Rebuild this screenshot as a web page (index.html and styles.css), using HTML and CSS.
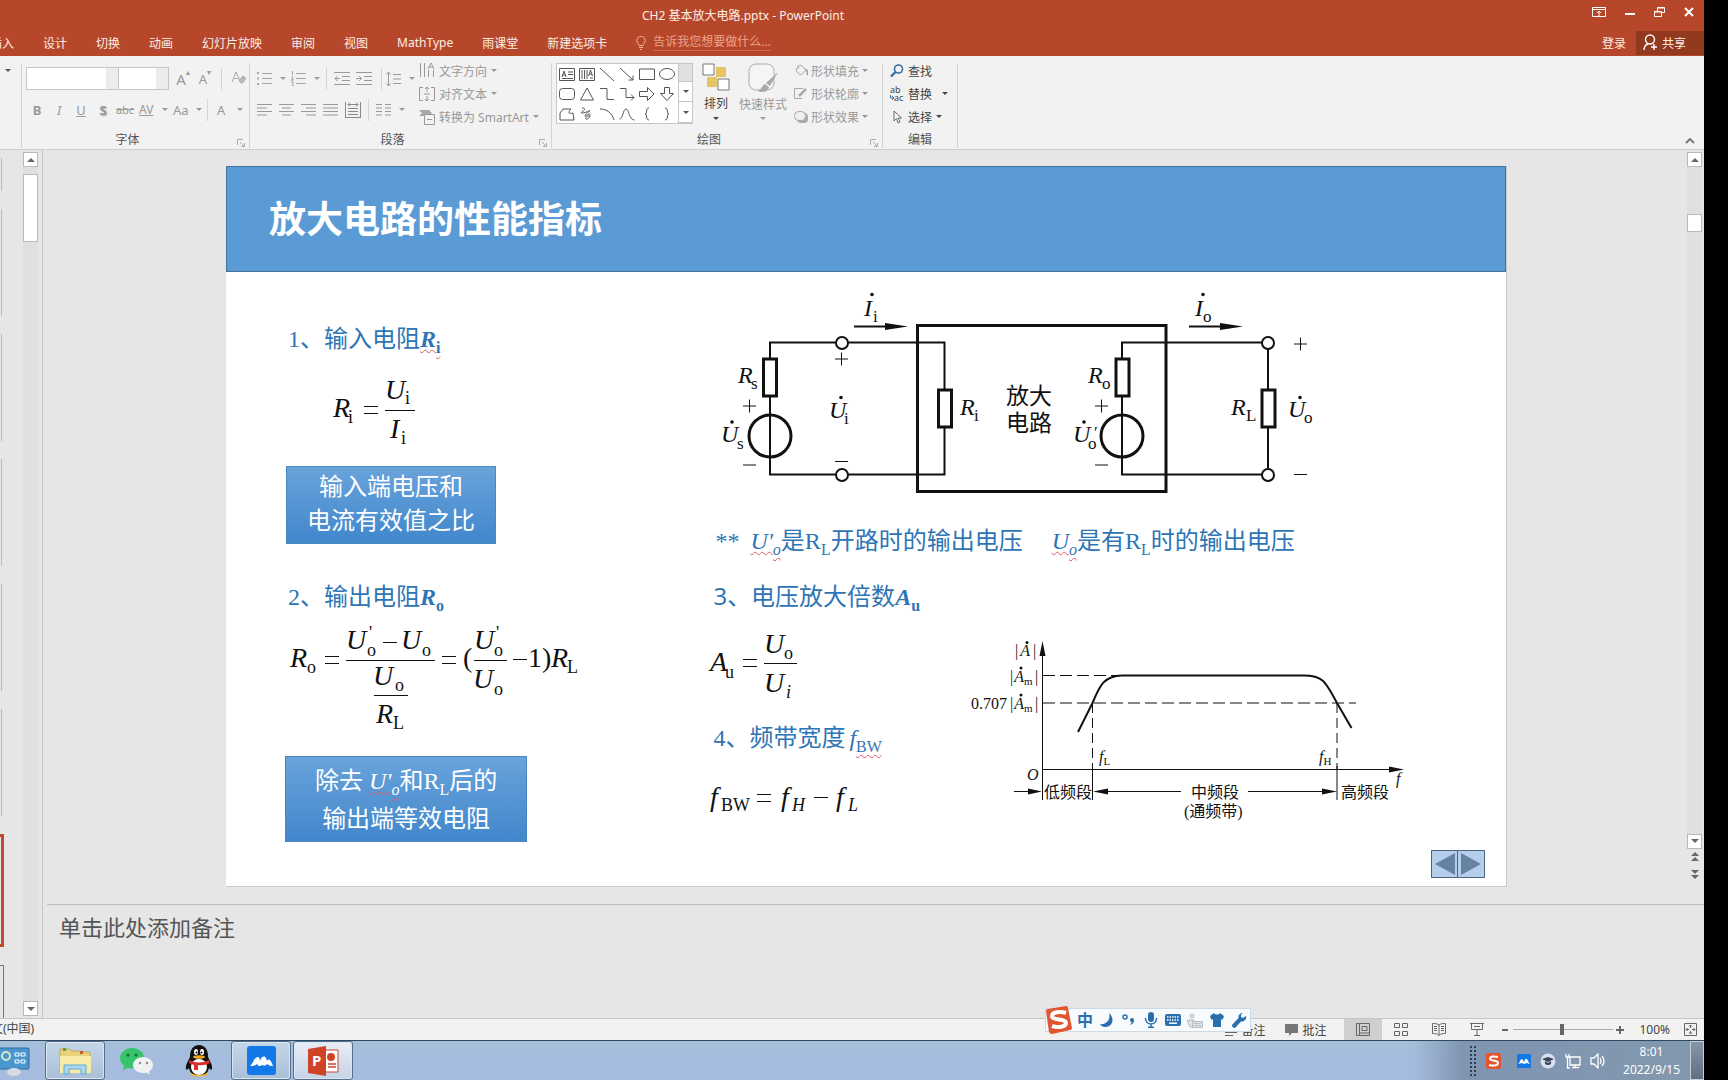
FILE: index.html
```html
<!DOCTYPE html>
<html lang="zh-CN">
<head>
<meta charset="utf-8">
<title>CH2 基本放大电路.pptx - PowerPoint</title>
<link rel="stylesheet" href="styles.css">
</head>
<body>
<div class="screen">

<header class="titlebar">
	<div class="title-row">
		<h1 class="doc-title">CH2 基本放大电路.pptx - PowerPoint</h1>
		<div class="window-buttons">
			<button aria-label="功能区显示选项"><svg width="14" height="10" viewBox="0 0 14 10" fill="none" stroke="#fff"><path d="M.5.5h13v9H.5zM.5 2.5h13M7 9V4M5 6l2-2 2 2"/></svg></button>
			<button aria-label="最小化"><svg width="10" height="10" viewBox="0 0 10 10"><path d="M0 6h10v2H0z" fill="#fff"/></svg></button>
			<button aria-label="还原"><svg width="11" height="10" viewBox="0 0 11 10" fill="none" stroke="#fff"><path d="M.5 4.5h7v5h-7zM.5 5h7M3.500 4V.5h7v5H8M3.500 1h7"/></svg></button>
			<button aria-label="关闭"><svg width="10" height="10" viewBox="0 0 10 10"><path d="M1 1l8 8M9 1L1 9" stroke="#fff" stroke-width="2"/></svg></button>
		</div>
	</div>
	<nav class="tabs">
		<a href="#">插入</a>
		<a href="#">设计</a>
		<a href="#">切换</a>
		<a href="#">动画</a>
		<a href="#">幻灯片放映</a>
		<a href="#">审阅</a>
		<a href="#">视图</a>
		<a href="#">MathType</a>
		<a href="#">雨课堂</a>
		<a href="#">新建选项卡</a>
		<a href="#" class="tell-me"><svg width="10" height="14" viewBox="0 0 10 14" fill="none" stroke="#f2b5a2"><path d="M3 9.500C3 7.500.8 7 .8 4.500a4.200 4.200 0 0 1 8.400 0C9.200 7 7 7.500 7 9.500zM3 11.500h4M4 13.500h2"/></svg><span>告诉我您想要做什么...</span></a>
		<a href="#" class="login">登录</a>
		<button class="share"><svg width="15" height="17" viewBox="0 0 15 17" fill="none" stroke="#fff" stroke-width="1.400"><circle cx="7" cy="5.500" r="4.500"/><path d="M1 16c0-3 1.500-5 4-6M8 13h6M11 10v6"/></svg>共享</button>
	</nav>
</header>

<!-- ribbon -->
<div class="ribbon">
	<div class="group group-cut"><span class="cut-caret caret"></span></div>

	<section class="group group-font">
		<div class="row">
			<select class="font-name" aria-label="字体"></select><select class="font-size" aria-label="字号"></select>
			<button class="tool big-a" aria-label="增大字号">A<sup>▴</sup></button>
			<button class="tool small-a" aria-label="减小字号">A<sup>▾</sup></button>
			<span class="sep"></span>
			<button class="tool" aria-label="清除格式"><svg width="15" height="15" viewBox="0 0 15 15" fill="none" stroke="#aaa"><path d="M1 11L5 1l4 9M2.500 7.500H8"/><path d="M8 10l4-5 3 2.500-4 5z" fill="#bbb"/></svg></button>
		</div>
		<div class="row">
			<button class="tool"><b>B</b></button>
			<button class="tool"><i>I</i></button>
			<button class="tool"><u>U</u></button>
			<button class="tool shadow-s"><b>S</b></button>
			<button class="tool small"><s>abc</s></button>
			<button class="tool drop av">AV<span class="caret"></span></button>
			<button class="tool drop">Aa<span class="caret"></span></button>
			<span class="sep"></span>
			<button class="tool drop font-color">A<span class="caret"></span></button>
		</div>
		<h2 class="group-name">字体</h2>
		<button class="launcher" aria-label="字体设置"><svg width="8" height="8" viewBox="0 0 8 8" fill="none" stroke="#aaa"><path d="M.5 6V.5H6M3 3l4 4M7.500 4v3.500H4"/></svg></button>
	</section>

	<section class="group group-para">
		<div class="para-tools">
			<div class="row">
				<button class="tool drop" aria-label="项目符号"><svg width="15" height="15" viewBox="0 0 15 15" stroke="#a5a5a5"><path d="M0 2h2M0 7.500h2M0 13h2" stroke-width="2"/><path d="M5 2.500h10M5 7.500h10M5 12.500h10"/></svg><span class="caret"></span></button>
				<button class="tool drop" aria-label="编号"><svg width="15" height="15" viewBox="0 0 15 15" stroke="#a5a5a5" fill="none"><path d="M1.500 0v4M0 6h2v1L0 9h3M0 11h2v4H0M5 2.500h10M5 7.500h10M5 12.500h10"/></svg><span class="caret"></span></button>
				<span class="sep"></span>
				<button class="tool" aria-label="减少缩进"><svg width="16" height="14" viewBox="0 0 16 14" stroke="#999" fill="none"><path d="M0 .5h16M8 4.500h8M8 8.500h8M0 12.500h16M6 6.500H1M3.500 4L1 6.500 3.500 9"/></svg></button>
				<button class="tool" aria-label="增加缩进"><svg width="16" height="14" viewBox="0 0 16 14" stroke="#999" fill="none"><path d="M0 .5h16M8 4.500h8M8 8.500h8M0 12.500h16M0 6.500h5M3 4l2.500 2.500L3 9"/></svg></button>
				<span class="sep"></span>
				<button class="tool drop" aria-label="行距"><svg width="15" height="16" viewBox="0 0 15 16" stroke="#999" fill="none"><path d="M2.500 1v14M.5 3.500l2-2.500 2 2.500M.5 12.500l2 2.500 2-2.500M7 3.500h8M7 8h8M7 12.500h8"/></svg><span class="caret"></span></button>
			</div>
			<div class="row row-align">
				<button class="tool" aria-label="左对齐"><svg width="15" height="12" viewBox="0 0 15 12" stroke="#999"><path d="M0 .5h15M0 4h10M0 7.500h15M0 11h10"/></svg></button>
				<button class="tool" aria-label="居中"><svg width="15" height="12" viewBox="0 0 15 12" stroke="#999"><path d="M0 .5h15M3 4h9M0 7.500h15M3 11h9"/></svg></button>
				<button class="tool" aria-label="右对齐"><svg width="15" height="12" viewBox="0 0 15 12" stroke="#999"><path d="M0 .5h15M5 4h10M0 7.500h15M5 11h10"/></svg></button>
				<button class="tool" aria-label="两端对齐"><svg width="15" height="12" viewBox="0 0 15 12" stroke="#999"><path d="M0 .5h15M0 4h15M0 7.500h15M0 11h15"/></svg></button>
				<button class="tool" aria-label="分散对齐"><svg width="16" height="16" viewBox="0 0 16 16" stroke="#888" fill="none"><path d="M.5 0v16M15.500 0v16M3 2.500h10M5 .5l-2 2 2 2M11 .5l2 2-2 2M3 6.500h10M3 9.500h10M3 12.500h10M0 15.500h16"/></svg></button>
				<span class="sep"></span>
				<button class="tool drop" aria-label="分栏"><svg width="15" height="12" viewBox="0 0 15 12" stroke="#999"><path d="M0 .5h6M9 .5h6M0 4h6M9 4h6M0 7.500h6M9 7.500h6M0 11h6M9 11h6"/></svg><span class="caret"></span></button>
			</div>
		</div>
		<div class="stack">
			<button class="wide"><svg width="16" height="16" viewBox="0 0 16 16" stroke="#999" fill="none"><path d="M1.500 0v14M5.500 0v14M9.500 7v7M14.500 7v7M9 6l3-6 3 6M10 4h4"/></svg>文字方向<span class="caret"></span></button>
			<button class="wide"><svg width="16" height="16" viewBox="0 0 16 16" stroke="#999" fill="none"><path d="M4 1.500H.5v13H4M12 1.500h3.500v13H12M8 1v5M6 3l2-2 2 2M8 15v-5M6 13l2 2 2-2M5 8h6"/></svg>对齐文本<span class="caret"></span></button>
			<button class="wide"><svg width="16" height="16" viewBox="0 0 16 16" stroke="#999" fill="none"><path d="M0 1h10l3 3-3 3H0l3-3z" fill="#aaa" stroke="none"/><path d="M5.500 5.500h10v10h-10z" fill="#f1f2f1"/><path d="M8 10.500h5"/></svg>转换为 SmartArt<span class="caret"></span></button>
		</div>
		<h2 class="group-name">段落</h2>
		<button class="launcher" aria-label="段落设置"><svg width="8" height="8" viewBox="0 0 8 8" fill="none" stroke="#aaa"><path d="M.5 6V.5H6M3 3l4 4M7.500 4v3.500H4"/></svg></button>
	</section>

	<section class="group group-draw">
		<div class="gallery">
			<div class="shapes">
				<button aria-label="文本框"><svg viewBox="0 0 16 14"><path d="M.5 1.500h15v12H.5zM3 10l2-6 2 6M4 8h2M9 5h5M9 7.500h5M3 11.500h11"/></svg></button>
				<button aria-label="竖排文本框"><svg viewBox="0 0 16 14"><path d="M.5 1.500h15v12H.5zM3 3v9M5.500 3v9M8 3v9M9.500 9l2-6 2 6M10 7h3M11 11h3"/></svg></button>
				<button aria-label="直线"><svg viewBox="0 0 16 14"><path d="M1 1l14 13"/></svg></button>
				<button aria-label="箭头"><svg viewBox="0 0 16 14"><path d="M1 1l13 12M14 8.500V13H9.500"/></svg></button>
				<button aria-label="矩形"><svg viewBox="0 0 16 14"><path d="M.5 2h15v10.500H.5z"/></svg></button>
				<button aria-label="椭圆"><svg viewBox="0 0 16 14"><ellipse cx="8" cy="7" rx="7.500" ry="5.500"/></svg></button>
				<button aria-label="圆角矩形"><svg viewBox="0 0 16 14"><rect x=".5" y="1.500" width="15" height="11" rx="3"/></svg></button>
				<button aria-label="三角形"><svg viewBox="0 0 16 14"><path d="M8 1l6.500 12h-13z"/></svg></button>
				<button aria-label="肘形"><svg viewBox="0 0 16 14"><path d="M1 1.500h7v11h7"/></svg></button>
				<button aria-label="肘形箭头"><svg viewBox="0 0 16 14"><path d="M1 1.500h6v9h8M12 7.500l3 3-3 3"/></svg></button>
				<button aria-label="右箭头"><svg viewBox="0 0 16 14"><path d="M.5 4.500h8v-4L15 7l-6.500 6.500v-4h-8z"/></svg></button>
				<button aria-label="下箭头"><svg viewBox="0 0 16 14"><path d="M5.500.5h5v6h4L8 13.500 1.500 6.500h4z"/></svg></button>
				<button aria-label="任意多边形"><svg viewBox="0 0 16 14"><path d="M1 13V6l3-4h8C8 6 10 7 14 6l1 7z"/></svg></button>
				<button aria-label="自由曲线"><svg viewBox="0 0 16 14"><path d="M3 1c4 0 3 2 0 4s3 1 7-1-5 4-4 5 5-4 5-1-3 5-4 4 1-3 3-3"/></svg></button>
				<button aria-label="弧形"><svg viewBox="0 0 16 14"><path d="M1 2c7 0 12 4 14 11"/></svg></button>
				<button aria-label="曲线"><svg viewBox="0 0 16 14"><path d="M.5 12C4 12 4 2 7 2s3 11 8.500 11"/></svg></button>
				<button aria-label="左大括号"><svg viewBox="0 0 16 14"><path d="M10 1C6 1 9 7 6 7c3 0 0 6 4 6"/></svg></button>
				<button aria-label="右大括号"><svg viewBox="0 0 16 14"><path d="M6 1c4 0 1 6 4 6-3 0 0 6-4 6"/></svg></button>
			</div>
			<div class="gallery-scroll">
				<button class="dim" aria-label="上一行"></button>
				<button aria-label="下一行"><span class="caret"></span></button>
				<button class="more" aria-label="其他"><span class="caret"></span></button>
			</div>
		</div>
		<button class="tall dark"><svg width="28" height="28" viewBox="0 0 28 28"><path d="M14 4h10v10H14zM5 14h10v10H5z" fill="#e3c566"/><path d="M1 1h11v11H1zM16 16h11v11H16z" fill="#fff" stroke="#777"/></svg>排列<span class="caret"></span></button>
		<button class="tall"><svg width="30" height="30" viewBox="0 0 30 30"><rect x="1" y="1" width="25" height="26" rx="7" fill="#f5f5f7" stroke="#aaa"/><path d="M30 9L18 20l4 3zM17 21c-3 1-3 6-8 7 6 2 11 1 12-4z" fill="#aaa"/></svg>快速样式<span class="caret"></span></button>
		<div class="stack">
			<button class="wide"><svg width="14" height="14" viewBox="0 0 14 14" stroke="#aaa" fill="none"><path d="M2 5l5-4 5 5-5 5-4-3zM4 1v4"/><path d="M11 5c3 2 3 4 2 6" stroke-width="2"/></svg>形状填充<span class="caret"></span></button>
			<button class="wide"><svg width="14" height="14" viewBox="0 0 14 14" stroke="#aaa" fill="none"><path d="M9 1.500H.5v10H8"/><path d="M5 9l7-7" stroke-width="2.500"/></svg>形状轮廓<span class="caret"></span></button>
			<button class="wide"><svg width="14" height="14" viewBox="0 0 14 14"><rect x="3" y="3" width="11" height="10" rx="4" fill="#aaa"/><rect x=".5" y="1.500" width="11" height="9" rx="4" fill="#eee" stroke="#aaa"/></svg>形状效果<span class="caret"></span></button>
		</div>
		<h2 class="group-name">绘图</h2>
		<button class="launcher" aria-label="形状设置"><svg width="8" height="8" viewBox="0 0 8 8" fill="none" stroke="#aaa"><path d="M.5 6V.5H6M3 3l4 4M7.500 4v3.500H4"/></svg></button>
	</section>

	<section class="group group-edit">
		<div class="stack">
			<button class="wide dark"><svg width="14" height="14" viewBox="0 0 14 14" fill="none" stroke="#3a6ea5" stroke-width="1.600"><circle cx="8.500" cy="5" r="4"/><path d="M5.500 8L1 12.500" stroke-width="2.400"/></svg>查找</button>
			<button class="wide dark"><svg width="14" height="16" viewBox="0 0 14 16" font-size="9" fill="#444"><text x="0" y="7">ab</text><text x="4" y="15">ac</text><path d="M.5 9v3H4M2 10l2 2-2 2" fill="none" stroke="#3a6ea5"/></svg>替换<span class="caret caret-far"></span></button>
			<button class="wide dark"><svg width="14" height="14" viewBox="0 0 14 14" fill="#fff" stroke="#666"><path d="M4 1v10l2.500-2.500L8 13l2-1-2-4h3.500z"/></svg>选择<span class="caret"></span></button>
		</div>
		<h2 class="group-name">编辑</h2>
	</section>

	<button class="collapse" aria-label="折叠功能区"><svg width="10" height="6" viewBox="0 0 10 6" fill="none" stroke="#777" stroke-width="2"><path d="M1 5l4-4 4 4"/></svg></button>
</div>

<main class="workspace">
	<aside class="thumbs">
		<div class="thumb-list">
			<button class="thumb first" aria-label="幻灯片 1"></button>
			<button class="thumb" aria-label="幻灯片 2"></button>
			<button class="thumb" aria-label="幻灯片 3"></button>
			<button class="thumb" aria-label="幻灯片 4"></button>
			<button class="thumb" aria-label="幻灯片 5"></button>
			<button class="thumb" aria-label="幻灯片 6"></button>
			<button class="thumb current" aria-label="幻灯片 7"></button>
			<button class="thumb next" aria-label="幻灯片 8"></button>
		</div>
		<div class="scrollbar">
			<button class="arrow up" aria-label="向上滚动"></button>
			<div class="track"><div class="handle"></div></div>
			<button class="arrow down" aria-label="向下滚动"></button>
		</div>
	</aside>

	<div class="editor">
		<div class="canvas">
			<article class="slide">
				<header class="slide-head"><h2>放大电路的性能指标</h2></header>
				<div class="slide-body">
					<div class="col-left">
						<h3>1、输入电阻<b class="typo"><i>R</i><sub>i</sub></b></h3>
						<svg class="eq" width="180" height="109" viewBox="286 357 180 109">
							<g class="var"><text x="333" y="417">R</text><text x="385" y="399">U</text><text x="390" y="438">I</text></g>
							<g class="idx"><text x="348" y="423">i</text><text x="405" y="404">i</text><text x="401" y="444">i</text></g>
							<path d="M364 406.500h14M364 413.500h14M385 410.500h30"/>
						</svg>
						<p class="callout">输入端电压和<br>电流有效值之比</p>
						<h3>2、输出电阻<b><i>R</i><sub>o</sub></b></h3>
						<svg class="eq" width="310" height="141" viewBox="286 615 310 141">
							<g class="var"><text x="290" y="667">R</text><text x="346" y="649">U</text><text x="401" y="649">U</text><text x="373" y="685">U</text><text x="376" y="723">R</text><text x="474" y="649">U</text><text x="473" y="688">U</text><text x="551" y="667">R</text></g>
							<g class="idx"><text x="307" y="673">o</text><text x="367" y="656">o</text><text x="422" y="656">o</text><text x="395" y="691">o</text><text x="393" y="729">L</text><text x="494" y="656">o</text><text x="494" y="695">o</text><text x="567" y="673">L</text><text x="369" y="639">'</text><text x="496" y="639">'</text></g>
							<g class="num"><text x="463" y="667">(</text><text x="528" y="667">1)</text></g>
							<path d="M325 656.500h14M325 663.500h14M346 660.500h89M374 695.500h34M383 642.500h14M442 656.500h14M442 663.500h14M474 660.500h33M513 659.500h14"/>
						</svg>
						<p class="callout callout-tall">除去 <span class="typo"><i>U'</i><sub><i>o</i></sub></span>和R<sub>L</sub>后的<br>输出端等效电阻</p>
					</div>

					<div class="col-right">
						<!-- equivalent circuit of the amplifier -->
						<svg class="circuit" width="620" height="240" viewBox="713 283 620 240">
							<g class="wire">
								<path d="M836 342.500H770V358M770 397V474.500H836M848 342.500H944.500V389M944.500 428V474.500H848"/>
								<path d="M1262 342.500H1122V358M1122 397V474.500H1262M1268 349V389M1268 428V468"/>
							</g>
							<g class="part">
								<rect x="917.500" y="325.500" width="248.500" height="166"/>
								<rect x="763.500" y="359" width="13" height="37"/>
								<rect x="938.500" y="390" width="13" height="37"/>
								<rect x="1116" y="359" width="13" height="37"/>
								<rect x="1262" y="390" width="13" height="37"/>
								<circle cx="770" cy="436" r="21"/>
								<circle cx="1122" cy="436" r="21"/>
							</g>
							<g class="terminal">
								<circle cx="842" cy="343" r="6"/><circle cx="842" cy="475" r="6"/>
								<circle cx="1268" cy="343" r="6"/><circle cx="1268" cy="475" r="6"/>
							</g>
							<path class="wire" d="M854 326.500h34M1189 326.500h34"/>
							<path d="M885 323l23 3.500-23 3.500zM1220 323l23 3.500-23 3.500z"/>
							<g class="var"><text x="864" y="316">I</text><text x="1195" y="316">I</text><text x="738" y="383">R</text><text x="721" y="442">U</text><text x="829" y="418">U</text><text x="960" y="415">R</text><text x="1088" y="383">R</text><text x="1073" y="442">U</text><text x="1231" y="415">R</text><text x="1288" y="417">U</text></g>
							<g class="idx"><text x="873" y="322">i</text><text x="1203" y="322">o</text><text x="751" y="389">s</text><text x="737" y="449">s</text><text x="844" y="424">i</text><text x="974" y="421">i</text><text x="1102" y="389">o</text><text x="1088" y="449">o</text><text x="1246" y="421">L</text><text x="1304" y="423">o</text><text x="1094" y="438">′</text></g>
							<g><circle cx="872" cy="294.500" r="1.800"/><circle cx="1203" cy="294.500" r="1.800"/><circle cx="732" cy="422" r="1.800"/><circle cx="841" cy="397.500" r="1.800"/><circle cx="1084" cy="422" r="1.800"/><circle cx="1300" cy="397.500" r="1.800"/></g>
							<path class="sign" d="M743 406h13M749.500 399.500v13M743 465h13M835 359h13M841.500 352.500v13M835 461.500h13M1095 406h13M1101.500 399.500v13M1095 465h13M1294 344h13M1300.500 337.500v13M1294 474.500h13"/>
							<g class="cn"><text x="1006" y="404">放大</text><text x="1006" y="431">电路</text></g>
						</svg>
						<p class="note"><span>**</span><span><span class="typo"><i>U'</i><sub><i>o</i></sub></span>是R<sub>L</sub>开路时的输出电压</span><span class="second"><span class="typo"><i>U</i><sub><i>o</i></sub></span>是有R<sub>L</sub>时的输出电压</span></p>

						<div class="lower">
							<div class="lower-text">
								<h3><span class="sans">3</span>、电压放大倍数<b><i>A</i><sub>u</sub></b></h3>
								<svg class="eq" width="200" height="105" viewBox="709 615 200 105">
									<g class="var"><text x="711" y="671">A</text><text x="765" y="653">U</text><text x="765" y="692">U</text></g>
									<g class="idx"><text x="726" y="678">u</text><text x="785" y="659">o</text><text class="it" x="787" y="698">i</text></g>
									<path d="M744 659.500h14M744 666.500h14M765 663.500h33"/>
								</svg>
								<h3>4、频带宽度<i class="gap">f</i><sub class="typo">BW</sub></h3>
								<svg class="eq" width="200" height="80" viewBox="709 756 200 80">
									<g class="var"><text x="711" y="806">f</text><text x="782" y="806">f</text><text x="837" y="806">f</text></g>
									<g class="idx"><text x="722" y="811">BW</text><text class="it" x="793" y="811">H</text><text class="it" x="849" y="811">L</text></g>
									<path d="M758 794.500h14M758 801.500h14M815 797.500h14"/>
								</svg>
							</div>
							<div class="lower-chart">
								<svg class="chart" width="460" height="205" viewBox="960 635 460 205">
									<g class="axis"><path d="M1042.500 650V800M1042 769.500H1395M1092.500 766V800M1337 766V800M1014 791.500h20M1104 791.500h77M1248 791.500h78"/><path d="M1043 675.500h80M1043 703H1356" stroke-dasharray="12 5"/><path d="M1092.500 703v66M1337 703v66" stroke-dasharray="10 5"/></g>
									<path class="curve" d="M1078 732L1092.500 703C1100 685 1104 676 1122 675.500H1302C1322 675 1325 680 1337 703L1351.500 728"/>
									<path d="M1042.500 641l3 15h-6zM1404 769.500l-15 3v-6zM1042 791.500l-14 3v-6zM1093 791.500l15-3v6zM1337 791.500l-15-3v6z"/>
									<g class="lbl"><text x="1015" y="656">|<tspan class="it" dx="2">A</tspan></text><text x="1033" y="656">|</text><text x="1010" y="682">|<tspan class="it" dx="1">A</tspan><tspan class="tiny" dy="3">m</tspan></text><text x="1035" y="682">|</text><text x="971" y="709">0.707</text><text x="1010" y="709">|<tspan class="it" dx="1">A</tspan><tspan class="tiny" dy="3">m</tspan></text><text x="1035" y="709">|</text><text class="it" x="1027" y="780">O</text><text class="it" x="1396" y="784">f</text><text x="1099" y="762"><tspan class="it">f</tspan><tspan class="tiny" dy="3">L</tspan></text><text x="1319" y="762"><tspan class="it">f</tspan><tspan class="tiny" dy="3">H</tspan></text></g>
									<g><circle cx="1027" cy="642.500" r="1.500"/><circle cx="1021" cy="668" r="1.500"/><circle cx="1021" cy="695" r="1.500"/></g>
									<g class="band"><text x="1044" y="798">低频段</text><text x="1191" y="798">中频段</text><text x="1341" y="798">高频段</text><text x="1184" y="817">(通频带)</text></g>
								</svg>
								<div class="slide-nav">
									<button aria-label="上一张"><svg width="20" height="22" viewBox="0 0 20 22"><path d="M0 11L20 0v22z"/></svg></button>
									<button aria-label="下一张"><svg width="20" height="22" viewBox="0 0 20 22"><path d="M20 11L0 0v22z"/></svg></button>
								</div>
							</div>
						</div>
					</div>
				</div>
			</article>
			<div class="scrollbar scrollbar-slide">
				<button class="arrow up" aria-label="向上滚动"></button>
				<div class="track"><div class="handle"></div></div>
				<button class="arrow down" aria-label="向下滚动"></button>
				<button class="page" aria-label="上一张幻灯片"><svg width="8" height="10" viewBox="0 0 8 10"><path d="M4 0l4 4H0zM4 5l4 4H0z"/></svg></button>
				<button class="page" aria-label="下一张幻灯片"><svg width="8" height="10" viewBox="0 0 8 10"><path d="M4 5L0 1h8zM4 10L0 6h8z"/></svg></button>
			</div>
		</div>
		<div class="notes">单击此处添加备注</div>
	</div>
</main>

<footer class="statusbar">
	<span class="lang">文(中国)</span>
	<button class="status-btn notes-btn"><svg width="12" height="12" viewBox="0 0 12 12" stroke="#666"><path d="M0 8.500h12M0 11.500h8"/></svg>备注</button>
	<button class="status-btn comments-btn"><svg width="13" height="12" viewBox="0 0 13 12"><path d="M0 0h13v9H7l-3 3V9H0z" fill="#777"/></svg>批注</button>
	<div class="views">
		<button class="on" aria-label="普通视图"><svg width="14" height="13" viewBox="0 0 14 13"><path d="M.5.5h13v12H.5zM3.500.5v12M6 3.500h5v4H6zM3.500 10h10"/></svg></button>
		<button aria-label="幻灯片浏览"><svg width="14" height="13" viewBox="0 0 14 13"><path d="M.5.500h5v4h-5zM8.500.500h5v4h-5zM.5 8.500h5v4h-5zM8.500 8.500h5v4h-5z"/></svg></button>
		<button aria-label="阅读视图"><svg width="14" height="13" viewBox="0 0 14 13"><path d="M7 2C5 .5 3 .5.500.500v10c2.500 0 4.500 0 6.500 2 2-2 4-2 6.500-2v-10C11 .5 9 .5 7 2zM7 2v10M2 3.500h3M2 5.500h3M2 7.500h3M9 3.500h3M9 5.500h3M9 7.500h3"/></svg></button>
		<button aria-label="幻灯片放映"><svg width="14" height="13" viewBox="0 0 14 13"><path d="M0 .5h14M1.500.500v6h11v-6M4 3.500h6M7 7v5M4 12.500h6"/></svg></button>
	</div>
	<button class="zoom-btn" aria-label="缩小"><svg width="8" height="8" viewBox="0 0 8 8"><path d="M1 3h6v2H1z" fill="#666"/></svg></button>
	<input class="zoom" type="range" min="0" max="200" value="98" aria-label="显示比例">
	<button class="zoom-btn" aria-label="放大"><svg width="8" height="8" viewBox="0 0 8 8"><path d="M0 3h3V0h2v3h3v2H5v3H3V5H0z" fill="#666"/></svg></button>
	<span class="percent">100%</span>
	<button class="fit" aria-label="适应窗口"><svg width="13" height="13" viewBox="0 0 13 13" fill="none" stroke="#666"><path d="M.5.500h12v12H.5zM6.500 2v3M6.500 8v3M2 6.500h3M8 6.500h3M5 3.500L6.500 2 8 3.500M5 9.500L6.500 11 8 9.500M3.500 5L2 6.500 3.500 8M9.500 5L11 6.500 9.500 8"/></svg></button>
</footer>

<!-- input method bar floats over the status bar -->
<div class="ime">
	<svg class="ime-logo" width="29" height="28" viewBox="0 0 29 28"><path d="M1 5Q1 3 3 3L21 0q2 0 2 2l4 20q0 2-2 2L7 28q-2 0-3-2z" fill="#e2552f"/><path d="M21 7C15 5 7 6 7 10c0 5 14 2 14 7 0 4-8 5-14 3" fill="none" stroke="#fff" stroke-width="4"/></svg>
	<button class="zh">中</button>
	<button aria-label="半角"><svg width="14" height="14" viewBox="0 0 14 14"><path d="M9 0c6 5 4 14-4 14-2 0-4-1-5-3 6 1 11-4 9-11z"/></svg></button>
	<button aria-label="标点"><svg width="14" height="14" viewBox="0 0 14 14"><circle cx="3" cy="4" r="2" fill="none" stroke="#2a6fad" stroke-width="1.500"/><path d="M8 7a2 2 0 1 1 4 0q0 4-4 5 2-2 1.500-3Q8 9 8 7z"/></svg></button>
	<button aria-label="语音"><svg width="14" height="16" viewBox="0 0 14 16"><rect x="4" y="0" width="6" height="10" rx="3"/><path d="M1.500 6c0 8 11 8 11 0M7 12v3M4 15.200h6" fill="none" stroke="#2a6fad" stroke-width="1.500"/></svg></button>
	<button aria-label="软键盘"><svg width="16" height="12" viewBox="0 0 16 12"><rect width="16" height="12" rx="2"/><path d="M2 3h12M2 6h12" stroke="#fff" stroke-width="1.500" stroke-dasharray="1.500 1"/><path d="M4 9.200h8" stroke="#fff" stroke-width="1.500"/></svg></button>
	<button aria-label="账户"><svg class="faded" width="16" height="15" viewBox="0 0 16 15" stroke="#b5bcc2"><circle cx="5" cy="3" r="2"/><path d="M0 7h7v7H3z"/><path d="M5.500 8.500h10v6h-10zM7 10.500h7M7 12.500h7"/></svg></button>
	<button aria-label="皮肤"><svg width="14" height="14" viewBox="0 0 14 14"><path d="M4 0c1 2 5 2 6 0l4 3-1.500 4L11 6v8H3V6L1.500 7 0 3z"/></svg></button>
	<button aria-label="工具"><svg width="15" height="15" viewBox="0 0 15 15"><path d="M14 3l-3 2-2-1V1.500L11 0C8 0 6 2 6.500 5L0 12q0 3 3 3l6-6.500c3 .5 6-2 5-5.500z"/></svg></button>
</div>

<div class="taskbar">
	<button class="app control" aria-label="控制面板"><svg width="32" height="30" viewBox="0 0 32 30"><rect x="0" y="2" width="31" height="21" rx="1" fill="#4a97cf" stroke="#2b6c9f"/><circle cx="8" cy="10" r="4" fill="none" stroke="#d5e8c0" stroke-width="2"/><path d="M17 7h4v3h-4zM23 7h4v3h-4zM17 14h4v3h-4zM23 14h4v3h-4z" fill="none" stroke="#fff"/><ellipse cx="16" cy="26" rx="7" ry="4" fill="#d7dce2"/></svg></button>
	<button class="app open" aria-label="资源管理器"><svg width="34" height="30" viewBox="0 0 34 30"><path d="M2 3h9l2 2h9l2 1h8v20H2z" fill="#e9d27a" stroke="#c5a94c"/><path d="M2 10h31v17H2z" fill="#f7eba6"/><path d="M6 19h22v9h-5v-5H11v5H6z" fill="#aad9ef" stroke="#61a9ce"/><path d="M5 2h3v3H5z" fill="#5a9b4d"/><path d="M22 5h3v3h-3z" fill="#c75a3a"/></svg></button>
	<button class="app" aria-label="微信"><svg width="34" height="28" viewBox="0 0 34 28"><path d="M12 1C5 1 0 6 0 11c0 3 2 6 4 8l-1 4 5-2q2 .6 4 .6c7 0 12-5 12-10.600S19 1 12 1z" fill="#37c46b"/><circle cx="8" cy="8" r="1.500" fill="#176b39"/><circle cx="16" cy="8" r="1.500" fill="#176b39"/><path d="M23 10c-6 0-10 4-10 8s4 8 10 8q2 0 3-.5l4 2-1-3c2-1 4-4 4-6.500 0-4-4-8-10-8z" fill="#f0f2f3"/><circle cx="20" cy="16" r="1.200" fill="#888"/><circle cx="27" cy="16" r="1.200" fill="#888"/></svg></button>
	<button class="app" aria-label="QQ"><svg width="28" height="32" viewBox="0 0 28 32"><path d="M5 30q9 3 18 0l-2-4H7z" fill="#f2b43a"/><path d="M14 0C8 0 5 5 5 11c0 3-5 8-4 13 1 2 3-1 3-1 1 5 4 7 10 7s9-2 10-7c0 0 2 3 3 1 1-5-4-10-4-13 0-6-3-11-9-11z" fill="#111"/><ellipse cx="14" cy="22" rx="8" ry="8" fill="#fff"/><ellipse cx="11" cy="7" rx="2" ry="3" fill="#fff"/><ellipse cx="17" cy="7" rx="2" ry="3" fill="#fff"/><circle cx="11.500" cy="7.500" r="1"/><circle cx="16.500" cy="7.500" r="1"/><ellipse cx="14" cy="12" rx="6" ry="1.800" fill="#f2a51f"/><path d="M4 15q10 5 20 0l1 3q-6 3-12 2v5H9v-5l-5-2z" fill="#e02b2b"/></svg></button>
	<button class="app open" aria-label="腾讯会议"><svg width="29" height="29" viewBox="0 0 29 29"><rect width="29" height="29" rx="3" fill="#1378e8"/><path d="M3 20c3-2 4-9 8-9 2 0 2 4 2 4 1-4 4-6 6-3l1 3c1-3 4-2 6 5-4 0-4-1-6-2-1 2-3 2-5 1-2 2-4 1-5-1-2 2-4 2-7 2z" fill="#fff"/></svg></button>
	<button class="app open bright" aria-label="PowerPoint"><svg width="31" height="30" viewBox="0 0 31 30"><path d="M16 4h14v22H16z" fill="#fff" stroke="#c9432a"/><path d="M0 3l18-3v30L0 27z" fill="#cf4327"/><circle cx="23" cy="11" r="4" fill="#cf4327"/><path d="M20 18h8M20 21h8" stroke="#cf4327" stroke-width="1.500"/><text x="4" y="20" fill="#fff" font-size="15" font-weight="700">P</text></svg></button>
	<div class="tray">
		<span class="grip"></span>
		<button class="tray-ime" aria-label="搜狗输入法"><svg width="15" height="16" viewBox="0 0 15 16"><rect width="15" height="16" rx="2" fill="#e2552f"/><path d="M12 4C8 3 4 3 4 6c0 2 8 1 8 4 0 3-5 3-9 2" fill="none" stroke="#fff" stroke-width="2"/></svg></button>
		<button aria-label="腾讯会议"><svg width="14" height="14" viewBox="0 0 14 14"><rect width="14" height="14" rx="1" fill="#1378e8"/><path d="M1 10c2-1 2-5 4-5l2 3c1-4 3-4 4-1l2 3-3-1-3 1-2-1z" fill="#fff"/></svg></button>
		<button aria-label="雨课堂"><svg width="16" height="16" viewBox="0 0 16 16"><circle cx="8" cy="8" r="7.500" fill="#d8e1f0"/><path d="M2 6l6-2 6 2-6 3zM5 8v3q3 2 6 0V8L8 10z" fill="#394760"/></svg></button>
		<button aria-label="网络"><svg width="16" height="16" viewBox="0 0 16 16" fill="none" stroke="#fff" stroke-width="1.300"><path d="M5 4h10v8H5zM7 14.500h7M10 12v2M1 1v3h3V1M2.500 4v11H5"/></svg></button>
		<button aria-label="音量"><svg width="16" height="16" viewBox="0 0 16 16" fill="none" stroke="#fff" stroke-width="1.300"><path d="M1 5h3l4-4v14l-4-4H1zM10 5q2 3 0 6M12 3q4 5 0 10"/></svg></button>
		<time class="clock" datetime="2022-09-15T08:01">8:01<br>2022/9/15</time>
		<button class="show-desktop" aria-label="显示桌面"></button>
	</div>
</div>

</div>
</body>
</html>
```

FILE: styles.css
```css
* {
	box-sizing: border-box;
}
body {
	margin: 0;
	background-color: #000;
	font-family: "Noto Sans", "Noto Sans CJK SC", sans-serif;
	font-size: 12px;
	color: #444;
}
button {
	font: inherit;
	color: inherit;
	background: none;
	border: 0;
	padding: 0;
}
a {
	color: inherit;
	text-decoration: none;
}
h1, h2, h3, p {
	margin: 0;
	font-weight: normal;
}
svg {
	flex: none;
	display: block;
}
.screen {
	position: relative;
	display: flex;
	flex-direction: column;
	height: 100vh;
	margin-right: 24px;
	overflow: hidden;
	background-color: #e6e6e6;
}

/* title bar and tabs */
.titlebar {
	background-color: #b7472a;
	color: #fdeee6;
}
.title-row {
	display: grid;
	grid-template-columns: 1fr auto 1fr;
	height: 30px;
	padding-right: 10px;
}
.doc-title {
	grid-column: 2;
	margin-right: 208px;
	font-size: 12px;
	line-height: 31px;
}
.window-buttons {
	display: flex;
	justify-content: flex-end;
	align-items: center;
	gap: 19px;
	height: 23px;
}
.tabs {
	display: flex;
	align-items: center;
	gap: 29px;
	height: 26px;
	margin-left: -10px;
	padding-bottom: 1px;
	white-space: nowrap;
}
.tell-me {
	display: flex;
	align-items: center;
	gap: 7px;
	color: #eba38d;
}
.tell-me span {
	border-bottom: 1px solid #c96b50;
	line-height: 16px;
}
.login {
	margin-left: auto;
}
.share {
	display: flex;
	align-items: center;
	gap: 4px;
	height: 24px;
	margin-left: -19px;
	padding: 0 18px 0 7px;
	background-color: #93391f;
}

/* ribbon */
.ribbon {
	display: flex;
	height: 94px;
	background-color: #f1f2f1;
	border-bottom: 1px solid #cfcfcf;
	padding-top: 4px;
}
.group {
	position: relative;
	display: flex;
	flex-wrap: wrap;
	align-content: flex-start;
	height: 85px;
	margin-top: 3px;
	border-right: 1px solid #d4d4d4;
	color: #999;
}
.group-cut {
	width: 22px;
	padding: 6px 0 0 5px;
	color: #555;
}
.group-name {
	position: absolute;
	left: 0;
	right: 0;
	bottom: 0;
	text-align: center;
	font-size: 12px;
	line-height: 16px;
	color: #555;
}
.group-font .group-name, .group-para .group-name, .group-draw .group-name {
	padding-right: 16px;
}
.launcher {
	position: absolute;
	right: 4px;
	bottom: 1px;
}
.row {
	display: flex;
	align-items: center;
	height: 31px;
}
.tool {
	display: flex;
	align-items: center;
	justify-content: center;
	width: 22px;
	height: 22px;
	font-size: 13px;
}
.tool.drop {
	justify-content: space-between;
	width: 29px;
}
.tool.font-color {
	margin-left: 4px;
	width: 26px;
}
.caret {
	border: 3px solid transparent;
	border-top-color: currentColor;
	border-bottom: 0;
}
.sep {
	width: 1px;
	height: 22px;
	margin: 0 5px;
	background-color: #d4d4d4;
}
.group-font {
	width: 228px;
	padding-left: 4px;
}
.font-name, .font-size {
	appearance: none;
	width: 93px;
	height: 23px;
	border: 1px solid #c6c6c6;
	background: linear-gradient(to left, #ececec 12px, #fff 12px);
	border-radius: 0;
}
.font-size {
	width: 51px;
	margin: 0 3px 0 -1px;
}
.big-a {
	font-size: 15px;
}
sup {
	font-size: 8px;
	line-height: 8px;
	align-self: flex-start;
}
.small {
	font-size: 11px;
}
.shadow-s {
	text-shadow: 1px 1px 1px #aaa;
}
.av {
	margin: 0 5px 0 3px;
	text-decoration: underline;
	font-size: 12px;
}
.group-para {
	width: 302px;
	padding-left: 7px;
}
.para-tools {
	width: 162px;
}
.para-tools .row:first-child .drop + .drop {
	margin-left: 5px;
}
.para-tools .row:first-child .sep {
	margin: 0 4px 0 6px;
}
.row-align .tool:not(.drop) {
	justify-content: flex-start;
}
.row-align .sep {
	margin: 0 7px 0 1px;
}
.stack {
	display: flex;
	flex-direction: column;
	margin-top: -4px;
}
.wide {
	display: flex;
	align-items: center;
	gap: 4px;
	height: 23px;
	white-space: nowrap;
}
.caret-far {
	margin-left: 6px;
}
.dark {
	color: #444;
}
.group-draw {
	width: 331px;
	padding-left: 4px;
}
.gallery {
	display: flex;
	width: 137px;
	height: 61px;
	background-color: #fff;
	border: 1px solid #c6c6c6;
}
.shapes {
	display: grid;
	grid-template-columns: repeat(6, 20px);
	grid-template-rows: repeat(3, 20px);
	flex: 1;
}
.shapes button {
	display: flex;
	align-items: center;
	justify-content: center;
}
.shapes svg {
	width: 16px;
	height: 14px;
	fill: none;
	stroke: #555;
}
.gallery-scroll {
	display: grid;
	width: 14px;
	border-left: 1px solid #c6c6c6;
}
.gallery-scroll button {
	display: flex;
	align-items: center;
	justify-content: center;
	border-bottom: 1px solid #c6c6c6;
	color: #555;
}
.gallery-scroll .dim {
	background-color: #e0e0e0;
}
.tall {
	display: flex;
	flex-direction: column;
	align-items: center;
	justify-content: space-between;
	height: 57px;
	margin-left: 9px;
	line-height: 16px;
}
.tall + .stack {
	margin-left: 7px;
}
.group-draw .wide {
	gap: 3px;
}
.group-edit {
	width: 75px;
	padding-left: 7px;
}
.collapse {
	align-self: flex-end;
	margin: 0 9px 5px auto;
}

/* slide list */
.workspace {
	display: flex;
	flex: 1;
	min-height: 0;
}
.thumbs {
	display: flex;
	width: 43px;
	border-right: 1px solid #c4c4c4;
}
.thumb-list {
	display: flex;
	flex-direction: column;
	gap: 18px;
	width: 23px;
	padding-top: 8px;
	overflow: hidden;
}
.thumb {
	flex: none;
	width: 2px;
	height: 107px;
	border-right: 1px solid #9fc3d8;
}
.thumb.first {
	height: 33px;
}
.thumb.current {
	width: 4px;
	height: 113px;
	border: 3px solid #c5492a;
	border-left: 0;
}
.thumb.next {
	width: 4px;
	border: 1px solid #777;
	border-left: 0;
}
.scrollbar {
	display: flex;
	flex-direction: column;
	width: 15px;
	padding: 2px 0;
}
.arrow {
	display: flex;
	align-items: center;
	justify-content: center;
	height: 15px;
	background-color: #fff;
	border: 1px solid #b8b8b8;
}
.arrow::before {
	content: "";
	border: 4px solid transparent;
	border-top: 0;
	border-bottom-color: #666;
}
.arrow.down::before {
	border-top: 4px solid #666;
	border-bottom: 0;
}
.track {
	flex: 1;
	padding-top: 7px;
	background-color: #e0e0e0;
}
.handle {
	height: 68px;
	background-color: #fff;
	border: 1px solid #b8b8b8;
}

/* slide area */
.editor {
	display: flex;
	flex-direction: column;
	flex: 1;
}
.canvas {
	display: flex;
	gap: 180px;
	padding: 0 2px 0 183px;
}
.slide {
	flex: 1;
	margin: 16px 0 17px;
	aspect-ratio: 16 / 9;
	background-color: #fff;
	border-right: 1px solid #c8c8c8;
	border-bottom: 1px solid #c8c8c8;
	color: #2e75b6;
	font-size: 24px;
	font-family: "Liberation Serif", "Noto Sans CJK SC", serif;
}
.scrollbar-slide {
	padding-bottom: 21px;
}
.scrollbar-slide .track {
	padding-top: 47px;
}
.scrollbar-slide .handle {
	height: 18px;
}
.page {
	display: flex;
	align-items: center;
	justify-content: center;
	height: 17px;
}
.page svg {
	fill: #666;
}
.slide-head {
	height: 106px;
	padding: 2px 0 0 42px;
	background-color: #5b9bd5;
	border: 1px solid #41719c;
}
.slide-head h2 {
	font-size: 37px;
	line-height: 104px;
	font-weight: bold;
	color: #fff;
}
.slide-body {
	display: grid;
	grid-template-columns: 38fr 62fr;
}
.slide sub {
	font-size: 16px;
	line-height: 0;
}
.slide h3 {
	font-size: 24px;
	line-height: 36px;
	white-space: nowrap;
}
.sans {
	font-family: "Noto Sans", sans-serif;
	line-height: 0;
}
.typo, .typo sub {
	text-decoration: underline wavy #e0566b 1px;
	text-underline-offset: 2px;
}
.col-left {
	padding: 49px 0 0 60px;
}
.col-left h3 {
	padding-left: 2px;
}
.callout {
	width: fit-content;
	height: 78px;
	margin-bottom: 35px;
	padding: 3px 20px;
	text-align: center;
	line-height: 34px;
	color: #fff;
	background: linear-gradient(#69a3db, #4187cc);
	border: 1px solid #4a86c0;
}
.callout-tall {
	height: 86px;
	margin: 0 0 0 -1px;
	padding: 5px 29px;
	line-height: 38px;
}
.eq {
	fill: #111;
}
.eq path {
	stroke: #111;
}
.var {
	font-size: 28px;
	font-style: italic;
}
.idx {
	font-size: 18px;
}
.num {
	font-size: 28px;
}
.it {
	font-style: italic;
}
.circuit, .chart {
	fill: #111;
}
.circuit {
	margin: 11px 0 0 1px;
}
.circuit .var {
	font-size: 24px;
}
.circuit .idx {
	font-size: 17px;
}
.cn {
	font-size: 23px;
}
.wire, .terminal, .part, .sign, .axis, .curve {
	fill: none;
	stroke: #111;
	stroke-width: 2;
}
.part {
	stroke-width: 3;
}
.sign, .axis {
	stroke-width: 1;
}
.lbl {
	font-size: 16px;
}
.tiny {
	font-size: 11px;
}
.band {
	font-size: 16px;
}
.note {
	display: flex;
	padding-left: 3px;
	line-height: 36px;
	gap: 11px;
	white-space: nowrap;
}
.note .second {
	margin-left: 18px;
}
.lower {
	display: grid;
	grid-template-columns: 247px 1fr;
	margin-top: 20px;
}
.lower-text h3 {
	padding-left: 1px;
}
.gap {
	padding-left: 4px;
}
.lower-text .eq {
	margin-left: -4px;
}
.chart {
	margin: 56px 0 0 1px;
}
.slide-nav {
	display: flex;
	justify-content: flex-end;
	margin: 10px 21px 0 0;
}
.slide-nav button {
	display: flex;
	align-items: center;
	justify-content: center;
	width: 27px;
	height: 28px;
	background-color: #b5cfea;
	border: 1px solid #4c6785;
}
.slide-nav button + button {
	border-left: 0;
}
.slide-nav svg {
	fill: #6683a4;
}
.notes {
	flex: 1;
	margin-left: 4px;
	padding: 5px 12px;
	border-top: 1px solid #bdbdbd;
	font-size: 22px;
	line-height: 34px;
	color: #555;
}

/* status bar */
.statusbar {
	display: flex;
	align-items: center;
	height: 22px;
	background-color: #f1f2f1;
	border-top: 1px solid #c6c6c6;
}
.lang {
	margin-left: -9px;
	line-height: 20px;
	padding-bottom: 2px;
}
.status-btn {
	display: flex;
	align-items: center;
	gap: 4px;
}
.notes-btn {
	margin-left: auto;
}
.comments-btn {
	margin: 0 18px 0 20px;
}
.views {
	display: flex;
	height: 100%;
}
.views button {
	display: flex;
	align-items: center;
	justify-content: center;
	width: 38px;
}
.views .on {
	background-color: #cfcfcf;
}
.views svg {
	fill: none;
	stroke: #666;
}
.zoom-btn {
	margin-left: 5px;
}
.zoom {
	appearance: none;
	width: 100px;
	height: 12px;
	margin: 0 0 0 4px;
	background: linear-gradient(#aaa, #aaa) center / 100% 1px no-repeat;
}
.zoom::-webkit-slider-thumb {
	appearance: none;
	width: 4px;
	height: 11px;
	background-color: #666;
}
.zoom + .zoom-btn {
	margin-left: 3px;
}
.percent {
	margin: 0 14px 0 15px;
}
.fit {
	margin-right: 7px;
}

/* input method bar */
.ime {
	position: absolute;
	right: 453px;
	bottom: 48px;
	display: flex;
	align-items: center;
	height: 24px;
	background-color: #f8fbfe;
	border: 1px solid #cdd9e4;
}
.ime button {
	display: flex;
	align-items: center;
	justify-content: center;
	width: 22px;
	color: #2a6fad;
}
.ime button svg {
	fill: #2a6fad;
}
.ime button .faded {
	fill: #dfe3e6;
}
.ime-logo {
	margin-left: -1px;
}
.ime .zh {
	font-size: 16px;
	font-weight: bold;
	line-height: 20px;
}

/* taskbar */
.taskbar {
	display: flex;
	gap: 2px;
	height: 40px;
	background: linear-gradient(#a3c0d8, #a6bcde 40%);
	border-top: 1px solid #2f4964;
}
.app {
	display: flex;
	align-items: center;
	justify-content: center;
	width: 60px;
}
.app.control {
	width: 45px;
	margin-left: -2px;
	justify-content: flex-start;
}
.app.open {
	background: linear-gradient(#c5d6e8, #aabfd8);
	border: 1px solid #54708c;
	border-radius: 3px;
	box-shadow: inset 0 0 0 1px #dbe6f1;
}
.app.bright {
	background: linear-gradient(#e8eef6, #c5d3e6);
}
.tray {
	display: flex;
	align-items: center;
	gap: 9px;
	margin-left: auto;
	padding-left: 56px;
	background: linear-gradient(to right, transparent, #8095b2 50px, #8298ad);
	color: #fff;
}
.grip {
	width: 8px;
	height: 32px;
	background: radial-gradient(circle, #2e4257 1px, transparent 1px) 0 0 / 4px 4px;
}
.tray-ime {
	margin-right: 7px;
}
.clock {
	margin: 0 1px 0 8px;
	text-align: center;
	font-size: 12px;
	line-height: 18px;
}
.show-desktop {
	align-self: stretch;
	width: 14px;
	background: linear-gradient(#8496a8, #5f7084);
	border: 1px solid #c3cfdb;
}
```
